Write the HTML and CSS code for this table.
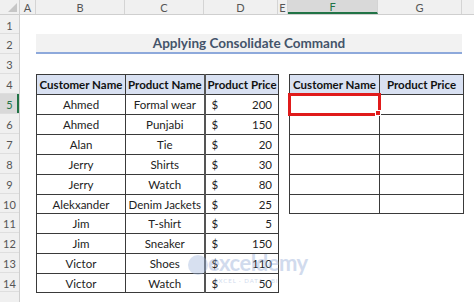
FILE: index.html
```html
<!DOCTYPE html>
<html lang="en">
<head>
    <meta charset="UTF-8">
    <meta name="viewport" content="width=device-width, initial-scale=1.0">
    <title>Applying Consolidate Command</title>
    <link rel="stylesheet" href="styles.css">
</head>
<body>

<div class="colheads">
    <div class="corner"><span class="corner-tri"></span></div>
    <div class="colhead col-a">A</div>
    <div class="colhead col-b">B</div>
    <div class="colhead col-c">C</div>
    <div class="colhead col-d">D</div>
    <div class="colhead col-e">E</div>
    <div class="colhead col-f selected">F</div>
    <div class="colhead col-g">G</div>
    <div class="colhead col-h"></div>
</div>

<div class="body">
    <div class="rowheads">
        <div class="rowhead r-short">1</div>
        <div class="rowhead">2</div>
        <div class="rowhead">3</div>
        <div class="rowhead">4</div>
        <div class="rowhead selected">5</div>
        <div class="rowhead">6</div>
        <div class="rowhead">7</div>
        <div class="rowhead">8</div>
        <div class="rowhead">9</div>
        <div class="rowhead r-short">10</div>
        <div class="rowhead">11</div>
        <div class="rowhead">12</div>
        <div class="rowhead">13</div>
        <div class="rowhead r-short">14</div>
        <div class="rowhead rest"></div>
    </div>

    <div class="sheet">
        <div class="blank-row r-short"></div>
        <div class="title-band">Applying Consolidate Command</div>
        <div class="blank-row"></div>

        <div class="tables">
            <table class="data source">
                <colgroup>
                    <col class="w-b">
                    <col class="w-c">
                    <col class="w-d">
                </colgroup>
                <tr class="head">
                    <th>Customer Name</th>
                    <th>Product Name</th>
                    <th class="price-col">Product Price</th>
                </tr>
                <tr><td>Ahmed</td><td>Formal wear</td><td class="money"><span>$</span><span>200</span></td></tr>
                <tr><td>Ahmed</td><td>Punjabi</td><td class="money"><span>$</span><span>150</span></td></tr>
                <tr><td>Alan</td><td>Tie</td><td class="money"><span>$</span><span>20</span></td></tr>
                <tr><td>Jerry</td><td>Shirts</td><td class="money"><span>$</span><span>30</span></td></tr>
                <tr><td>Jerry</td><td>Watch</td><td class="money"><span>$</span><span>80</span></td></tr>
                <tr class="r-short"><td>Alekxander</td><td>Denim Jackets</td><td class="money"><span>$</span><span>25</span></td></tr>
                <tr><td>Jim</td><td>T-shirt</td><td class="money"><span>$</span><span>5</span></td></tr>
                <tr><td>Jim</td><td>Sneaker</td><td class="money"><span>$</span><span>150</span></td></tr>
                <tr><td>Victor</td><td>Shoes</td><td class="money"><span>$</span><span>110</span></td></tr>
                <tr class="r-short"><td>Victor</td><td>Watch</td><td class="money"><span>$</span><span>50</span></td></tr>
            </table>

            <table class="data target">
                <colgroup>
                    <col class="w-f">
                    <col class="w-g">
                </colgroup>
                <tr class="head">
                    <th>Customer Name</th>
                    <th>Product Price</th>
                </tr>
                <tr><td class="active"><span class="sel-box"></span></td><td></td></tr>
                <tr><td></td><td></td></tr>
                <tr><td></td><td></td></tr>
                <tr><td></td><td></td></tr>
                <tr><td></td><td></td></tr>
                <tr class="r-short"><td></td><td></td></tr>
            </table>
        </div>

        <div class="watermark">
            <span class="wm-logo"></span>
            <span class="wm-word">exceldemy</span>
            <span class="wm-tag">EXCEL · DATA · BI</span>
        </div>
    </div>
</div>

</body>
</html>
```

FILE: styles.css
```css
* {
    margin: 0;
    padding: 0;
    box-sizing: border-box;
}
body {
    width: 474px;
    height: 302px;
    overflow: hidden;
    background: #ffffff;
    font-family: "Lato", "Open Sans", sans-serif;
    color: #222;
}

/* column letters */
.colheads {
    display: flex;
    height: 15px;
    background: #f0f0f0;
    border-bottom: 1px solid #cfcfcf;
}
.corner {
    position: relative;
    flex: none;
    width: 20px;
    border-right: 1px solid #cfcfcf;
}
.corner-tri {
    position: absolute;
    right: 2px;
    bottom: 2px;
    width: 0;
    height: 0;
    border-left: 9px solid transparent;
    border-bottom: 9px solid #c6c6c6;
}
.colhead {
    flex: none;
    display: flex;
    justify-content: center;
    align-items: center;
    font-size: 11px;
    color: #555;
    border-right: 1px solid #d4d4d4;
}
.colhead.selected {
    background: #d9d9d9;
    color: #217346;
    border-bottom: 2px solid #217346;
}
.col-a { width: 16px; }
.col-b { width: 89px; }
.col-c { width: 79px; }
.col-d { width: 74px; }
.col-e { width: 10px; }
.col-f { width: 90px; }
.col-g { width: 84px; }
.col-h { flex: 1; border-right: none; }

.body {
    display: flex;
    position: relative;
}

/* row numbers */
.rowheads {
    flex: none;
    width: 20px;
    display: flex;
    flex-direction: column;
    background: #f0f0f0;
    border-right: 1px solid #cfcfcf;
}
.rowhead {
    height: 20px;
    display: flex;
    align-items: center;
    justify-content: center;
    font-size: 11px;
    color: #555;
    border-bottom: 1px solid #dedede;
    padding-top: 2px;
}
.rowhead.r-short { height: 19px; }
.rowhead.selected {
    background: #d9d9d9;
    color: #217346;
    box-shadow: inset -2px 0 0 #217346;
}
.rowhead.rest {
    height: 20px;
    border-bottom: none;
}

/* worksheet area */
.sheet {
    flex: none;
    width: 454px;
    padding-left: 16px;
}
.blank-row { height: 20px; }
.blank-row.r-short { height: 19px; }
.title-band {
    width: 426px;
    height: 20px;
    background: #f2f2f2;
    border-bottom: 2px solid #8ea9db;
    text-align: center;
    font-size: 13.5px;
    font-weight: 700;
    color: #44546a;
    line-height: 19px;
}

.tables {
    display: flex;
    align-items: flex-start;
    gap: 10px;
}
.data {
    border-collapse: collapse;
    font-size: 11.5px;
    table-layout: fixed;
    flex: none;
}
.source { width: 242px; }
.target { width: 174px; }
.data tr { height: 20px; }
.data tr.r-short { height: 19px; }
.data th,
.data td {
    border: 1px solid #3a3a3a;
    text-align: center;
    padding: 0 2px;
    white-space: nowrap;
    overflow: hidden;
}
.data th {
    background: #d9e1f2;
    font-weight: 700;
    color: #111;
}
.w-b { width: 89px; }
.w-c { width: 79px; }
.w-d { width: 74px; }
.w-f { width: 90px; }
.w-g { width: 84px; }
.source td:nth-child(3),
.source .price-col { border-left: 2px solid #555; }
.money {
    padding: 0 6px !important;
}
.money span:first-child { float: left; }
.money span:last-child { float: right; }

.data .active { position: relative; overflow: visible; }
.sel-box {
    position: absolute;
    left: -2px;
    top: -2px;
    right: -2px;
    bottom: -2px;
    border: 3px solid #e01b1b;
}
.sel-box::after {
    content: "";
    position: absolute;
    right: -3px;
    bottom: -3px;
    width: 4px;
    height: 4px;
    background: #e01b1b;
    border: 1px solid #fff;
}

/* faint site watermark */
.watermark {
    position: absolute;
    left: 188px;
    top: 234px;
    width: 110px;
    height: 50px;
    opacity: 0.4;
    pointer-events: none;
}
.wm-logo {
    position: absolute;
    left: 0;
    top: 6px;
    width: 20px;
    height: 20px;
    border-radius: 50%;
    background: #9db4dc;
}
.wm-word {
    position: absolute;
    left: 20px;
    top: 0;
    font-size: 22px;
    font-weight: 700;
    color: #8ea6d4;
    letter-spacing: -0.5px;
}
.wm-tag {
    position: absolute;
    left: 26px;
    top: 28px;
    font-size: 6px;
    color: #8ea6d4;
    letter-spacing: 1px;
}
```
